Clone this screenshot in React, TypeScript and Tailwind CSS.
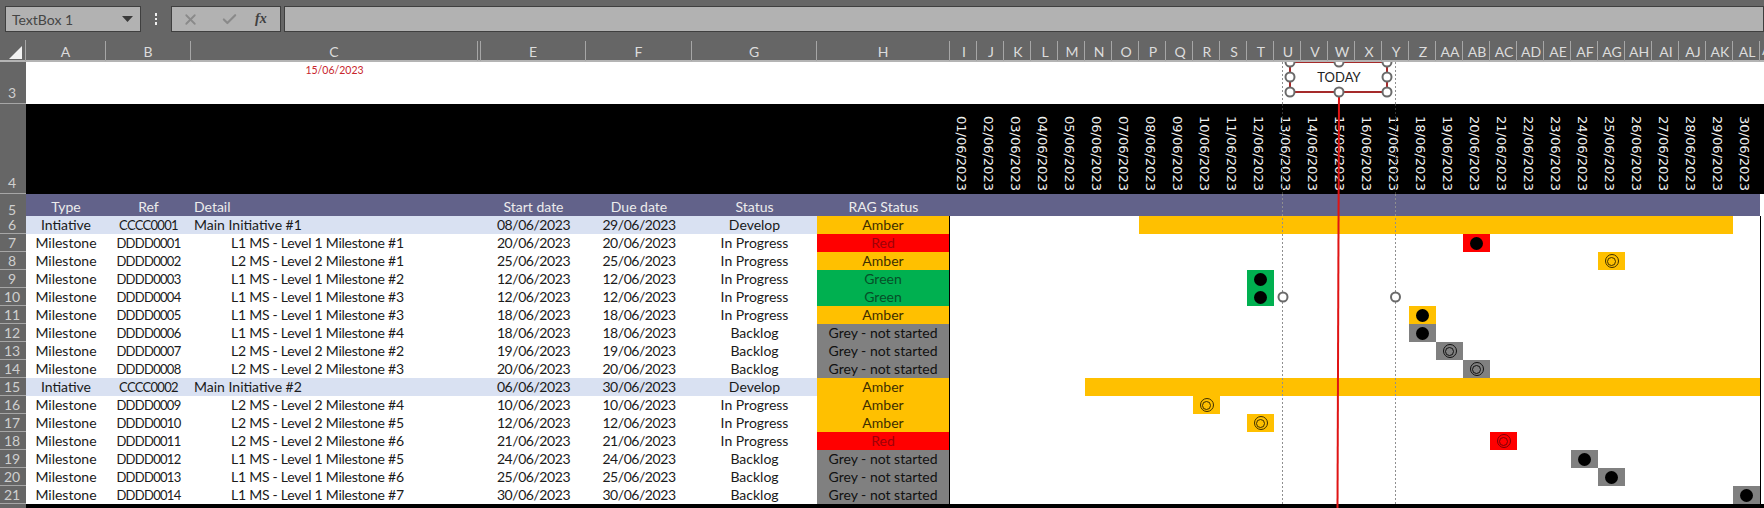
import { Check, X } from "lucide-react";

const COLS =
  "grid grid-cols-[26px_80px_85px_287px_3px_105px_106px_125px_133px_repeat(30,27px)_4px]";

const LETTERS = [
  "I", "J", "K", "L", "M", "N", "O", "P", "Q", "R", "S", "T", "U", "V", "W",
  "X", "Y", "Z", "AA", "AB", "AC", "AD", "AE", "AF", "AG", "AH", "AI", "AJ",
  "AK", "AL",
];

const RAG: Record<string, { bg: string; text: string; ring: string; label: string }> = {
  amber: { bg: "bg-[#ffc000]", text: "text-[#3d2e00]", ring: "text-[#3d2e00]", label: "Amber" },
  red: { bg: "bg-[#ff0000]", text: "text-[#a00008]", ring: "text-[#7a0006]", label: "Red" },
  green: { bg: "bg-[#00b050]", text: "text-[#064f28]", ring: "text-[#064f28]", label: "Green" },
  grey: { bg: "bg-[#808080]", text: "text-[#111111]", ring: "text-[#111111]", label: "Grey - not started" },
};

type Row = {
  num: number;
  type: string;
  ref: string;
  detail: string;
  start: string;
  due: string;
  status: string;
  rag: string;
  from: number;
  to: number;
  mark?: "dot" | "ring";
};

const rows: Row[] = [
  { num: 6, type: "Intiative", ref: "CCCC0001", detail: "Main Initiative #1", start: "08/06/2023", due: "29/06/2023", status: "Develop", rag: "amber", from: 8, to: 29 },
  { num: 7, type: "Milestone", ref: "DDDD0001", detail: "L1 MS - Level 1 Milestone #1", start: "20/06/2023", due: "20/06/2023", status: "In Progress", rag: "red", from: 20, to: 20, mark: "dot" },
  { num: 8, type: "Milestone", ref: "DDDD0002", detail: "L2 MS - Level 2 Milestone #1", start: "25/06/2023", due: "25/06/2023", status: "In Progress", rag: "amber", from: 25, to: 25, mark: "ring" },
  { num: 9, type: "Milestone", ref: "DDDD0003", detail: "L1 MS - Level 1 Milestone #2", start: "12/06/2023", due: "12/06/2023", status: "In Progress", rag: "green", from: 12, to: 12, mark: "dot" },
  { num: 10, type: "Milestone", ref: "DDDD0004", detail: "L1 MS - Level 1 Milestone #3", start: "12/06/2023", due: "12/06/2023", status: "In Progress", rag: "green", from: 12, to: 12, mark: "dot" },
  { num: 11, type: "Milestone", ref: "DDDD0005", detail: "L1 MS - Level 1 Milestone #3", start: "18/06/2023", due: "18/06/2023", status: "In Progress", rag: "amber", from: 18, to: 18, mark: "dot" },
  { num: 12, type: "Milestone", ref: "DDDD0006", detail: "L1 MS - Level 1 Milestone #4", start: "18/06/2023", due: "18/06/2023", status: "Backlog", rag: "grey", from: 18, to: 18, mark: "dot" },
  { num: 13, type: "Milestone", ref: "DDDD0007", detail: "L2 MS - Level 2 Milestone #2", start: "19/06/2023", due: "19/06/2023", status: "Backlog", rag: "grey", from: 19, to: 19, mark: "ring" },
  { num: 14, type: "Milestone", ref: "DDDD0008", detail: "L2 MS - Level 2 Milestone #3", start: "20/06/2023", due: "20/06/2023", status: "Backlog", rag: "grey", from: 20, to: 20, mark: "ring" },
  { num: 15, type: "Intiative", ref: "CCCC0002", detail: "Main Initiative #2", start: "06/06/2023", due: "30/06/2023", status: "Develop", rag: "amber", from: 6, to: 30 },
  { num: 16, type: "Milestone", ref: "DDDD0009", detail: "L2 MS - Level 2 Milestone #4", start: "10/06/2023", due: "10/06/2023", status: "In Progress", rag: "amber", from: 10, to: 10, mark: "ring" },
  { num: 17, type: "Milestone", ref: "DDDD0010", detail: "L2 MS - Level 2 Milestone #5", start: "12/06/2023", due: "12/06/2023", status: "In Progress", rag: "amber", from: 12, to: 12, mark: "ring" },
  { num: 18, type: "Milestone", ref: "DDDD0011", detail: "L2 MS - Level 2 Milestone #6", start: "21/06/2023", due: "21/06/2023", status: "In Progress", rag: "red", from: 21, to: 21, mark: "ring" },
  { num: 19, type: "Milestone", ref: "DDDD0012", detail: "L1 MS - Level 1 Milestone #5", start: "24/06/2023", due: "24/06/2023", status: "Backlog", rag: "grey", from: 24, to: 24, mark: "dot" },
  { num: 20, type: "Milestone", ref: "DDDD0013", detail: "L1 MS - Level 1 Milestone #6", start: "25/06/2023", due: "25/06/2023", status: "Backlog", rag: "grey", from: 25, to: 25, mark: "dot" },
  { num: 21, type: "Milestone", ref: "DDDD0014", detail: "L1 MS - Level 1 Milestone #7", start: "30/06/2023", due: "30/06/2023", status: "Backlog", rag: "grey", from: 30, to: 30, mark: "dot" },
];

const RowNum = ({ n, lift = "" }: { n: number; lift?: string }) => (
  <div
    className={`flex items-end justify-center pr-[2px] bg-[#666666] border-b border-[#a6a6a6] text-[#cfcfcf] text-[14px] leading-[17px] ${lift}`}
  >
    {n}
  </div>
);

const ColHead = ({ label, day }: { label: string; day?: boolean }) => (
  <div
    className={`flex items-center justify-center h-[20px] mt-[1px] overflow-hidden text-[14px] text-[#dcdcdc] border-r border-[#a6a6a6] ${
      day ? "pl-[2px]" : ""
    }`}
  >
    {label}
  </div>
);

const GanttRow = ({ row }: { row: Row }) => {
  const main = row.type === "Intiative";
  const band = main ? "bg-[#d9e1f2]" : "bg-white";
  const rag = RAG[row.rag];
  return (
    <div className={`${COLS} h-[18px] leading-[18px] text-[14px] text-[#1a1a1a]`}>
      <RowNum n={row.num} />
      <div className={`text-center ${band}`}>{row.type}</div>
      <div className={`text-center text-[13px] tracking-[-0.7px] ${band}`}>{row.ref}</div>
      <div className={`${band} ${main ? "pl-[3px]" : "pl-[40px] tracking-[-0.25px]"}`}>{row.detail}</div>
      <div className={band} />
      <div className={`text-center tracking-[-0.45px] ${band}`}>{row.start}</div>
      <div className={`text-center tracking-[-0.45px] ${band}`}>{row.due}</div>
      <div className={`text-center ${band}`}>{row.status}</div>
      <div className={`text-center border-r border-black ${rag.bg} ${rag.text}`}>{rag.label}</div>
      <div className="col-span-30 grid grid-cols-[repeat(30,27px)] bg-white">
        <div
          className={`flex items-center justify-center ${rag.bg}`}
          style={{ gridColumn: `${row.from} / ${row.to + 1}` }}
        >
          {row.mark === "dot" && <div className="w-[13px] h-[13px] rounded-full bg-black" />}
          {row.mark === "ring" && (
            <div className={`flex items-center justify-center w-[14px] h-[14px] rounded-full border border-current ${rag.ring}`}>
              <div className="w-[9px] h-[9px] rounded-full border border-current" />
            </div>
          )}
        </div>
      </div>
      <div className="bg-white border-l border-black" />
    </div>
  );
};

// selection frame of the text box plus the today line and its guides
const Overlay = () => {
  const handles = [
    [1290, 62], [1339, 62], [1387, 62],
    [1290, 77], [1387, 77],
    [1290, 92], [1339, 92], [1387, 92],
    [1283, 297], [1395.5, 297],
  ];
  return (
    <svg
      className="absolute left-0 top-[62px] pointer-events-none"
      width="1764"
      height="446"
      viewBox="0 62 1764 446"
    >
      {[1282.5, 1395.5].map((x) => (
        <g key={x} strokeDasharray="2 2">
          <line x1={x} y1="62" x2={x} y2="104" stroke="#8f8f8f" />
          <line x1={x} y1="104" x2={x} y2="194" stroke="#333333" />
          <line x1={x} y1="194" x2={x} y2="504" stroke="#8f8f8f" />
        </g>
      ))}
      <line x1="1339" y1="92" x2="1337.5" y2="508" stroke="#e01414" strokeWidth="2" />
      <rect x="1290" y="62" width="97" height="30" fill="none" stroke="#a52a2a" strokeWidth="2" />
      {handles.map(([cx, cy]) => (
        <circle key={`${cx}-${cy}`} cx={cx} cy={cy} r="4.5" fill="#fff" stroke="#6a6a6a" strokeWidth="2" />
      ))}
    </svg>
  );
};

export default function App() {
  return (
    <div className="relative w-[1764px] h-[508px] overflow-hidden bg-[#666666] font-['Lato','Liberation_Sans',sans-serif]">
      {/* formula bar */}
      <div className="flex items-center h-[40px] pb-[2px] pl-[5px] gap-[2px] bg-[#666666]">
        <div className="flex items-center justify-between w-[136px] h-[26px] px-[6px] bg-[#b2b2b2] border border-[#3f3f3f] text-[14px] text-[#454545]">
          <span>TextBox 1</span>
          <svg width="11" height="6" viewBox="0 0 11 6" className="mr-[1px]">
            <polygon points="0,0 11,0 5.5,6" fill="#3a3a3a" />
          </svg>
        </div>
        <div className="flex flex-col items-center justify-center gap-[2px] w-[26px]">
          <div className="w-[2.5px] h-[2.5px] bg-[#f0f0f0]" />
          <div className="w-[2.5px] h-[2.5px] bg-[#f0f0f0]" />
          <div className="w-[2.5px] h-[2.5px] bg-[#f0f0f0]" />
        </div>
        <div className="flex items-center w-[110px] h-[26px] pl-[10px] bg-[#b2b2b2] border border-[#3f3f3f] text-[#404040]">
          <X size={17} strokeWidth={2.5} className="text-[#8a8a8a]" />
          <Check size={17} strokeWidth={3} className="ml-[22px] text-[#8a8a8a]" />
          <span className="ml-[17px] font-['Liberation_Serif',serif] italic font-bold text-[14px] leading-none">
            fx
          </span>
        </div>
        <div className="flex-1 h-[26px] ml-[1px] bg-[#b2b2b2] border border-[#3f3f3f]" />
      </div>

      {/* column letters */}
      <div className={`${COLS} h-[22px] border-b-2 border-[#b4b4b4] bg-[#666666]`}>
        <div className="flex items-end justify-end pr-[3px] pb-[2px] border-r border-[#a6a6a6]">
          <svg width="13" height="13" viewBox="0 0 13 13">
            <polygon points="13,0 13,13 0,13" fill="#f2f2f2" />
          </svg>
        </div>
        <ColHead label="A" />
        <ColHead label="B" />
        <ColHead label="C" />
        <ColHead label="" />
        <ColHead label="E" />
        <ColHead label="F" />
        <ColHead label="G" />
        <ColHead label="H" />
        {LETTERS.map((l) => (
          <ColHead key={l} label={l} day />
        ))}
        <div className="overflow-hidden pl-[2px] leading-[20px] text-[14px] text-[#dcdcdc]">A</div>
      </div>

      {/* row 3 */}
      <div className={`${COLS} h-[42px] bg-white`}>
        <RowNum n={3} lift="pb-[2px]" />
        <div className="col-start-4 text-center text-[10.5px] leading-[16px] text-[#c8262c]">15/06/2023</div>
      </div>

      {/* row 4: rotated day labels */}
      <div className={`${COLS} h-[90px] bg-black`}>
        <RowNum n={4} lift="pb-[2px]" />
        <div className="col-start-10 col-span-30 grid grid-cols-[repeat(30,27px)]">
          {Array.from({ length: 30 }, (_, i) => (
            <div key={i} className="flex justify-center items-end pb-[3px] pr-[6px]">
              <span className="[writing-mode:vertical-rl] font-['DejaVu_Sans',sans-serif] text-[13px] leading-[16px] text-[#f2f2f2]">
                {String(i + 1).padStart(2, "0")}/06/2023
              </span>
            </div>
          ))}
        </div>
      </div>

      {/* row 5: table header */}
      <div className={`${COLS} h-[22px] leading-[25px] text-[14px] text-[#ececec]`}>
        <RowNum n={5} lift="pb-[1px]" />
        <div className="col-span-38 grid grid-cols-[80px_85px_287px_3px_105px_106px_125px_133px_810px] bg-[#62628a] border-b border-black">
          <div className="text-center">Type</div>
          <div className="text-center">Ref</div>
          <div className="pl-[3px]">Detail</div>
          <div />
          <div className="text-center">Start date</div>
          <div className="text-center">Due date</div>
          <div className="text-center">Status</div>
          <div className="text-center">RAG Status</div>
          <div />
        </div>
        <div className="bg-white" />
      </div>

      {rows.map((row) => (
        <GanttRow key={row.num} row={row} />
      ))}

      {/* black edge under the sheet */}
      <div className="flex h-[4px]">
        <div className="w-[26px] bg-[#666666]" />
        <div className="flex-1 bg-black" />
      </div>

      <Overlay />
      <div className="absolute left-[1291px] top-[64px] w-[96px] h-[28px] flex items-center justify-center text-[13px] text-[#222222]">
        TODAY
      </div>
    </div>
  );
}
